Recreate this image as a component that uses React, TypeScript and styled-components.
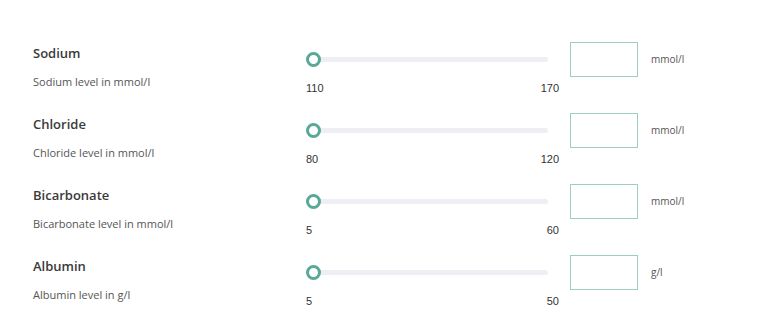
import styled, { createGlobalStyle } from "styled-components";

const Global = createGlobalStyle`
  body {
    margin: 0;
    background: #fff;
    font-family: "Open Sans", "Liberation Sans", sans-serif;
  }
`;

const Page = styled.div`
  padding: 40px 0 0 33px;
`;

const Row = styled.div`
  display: grid;
  grid-template-columns: 273px 253px 68px auto;
  height: 71px;
  align-items: start;
`;

const Label = styled.div`
  padding-top: 4px;
`;

const Title = styled.div`
  font-size: 13px;
  line-height: 18px;
  font-weight: 600;
  color: #3a3a3a;
`;

const Hint = styled.div`
  margin-top: 12px;
  font-size: 11px;
  line-height: 16px;
  color: #555;
`;

const SliderBox = styled.div`
  padding-top: 12px;
`;

const TrackWrap = styled.div`
  position: relative;
  height: 15px;
  margin-right: 11px;
`;

const Track = styled.div`
  position: absolute;
  left: 8px;
  right: 0;
  top: 5px;
  height: 5px;
  border-radius: 3px;
  background: #edeff4;
`;

const Thumb = styled.div`
  position: absolute;
  left: 0;
  top: 0;
  width: 15px;
  height: 15px;
  box-sizing: border-box;
  border-radius: 50%;
  border: 3px solid #5aa896;
  background: #fff;
`;

const Scale = styled.div`
  margin-top: 13px;
  display: flex;
  justify-content: space-between;
  font-family: "Liberation Sans", Arial, sans-serif;
  font-size: 11px;
  line-height: 16px;
  color: #333;
`;

const ValueInput = styled.input`
  box-sizing: border-box;
  width: 68px;
  height: 35px;
  margin: 2px 0 0 11px;
  border: 1px solid #9ccfc4;
  background: #fff;
  outline: none;
`;

const Unit = styled.div`
  margin: 12px 0 0 24px;
  font-size: 10px;
  line-height: 14px;
  color: #555;
`;

const items = [
  { name: "Sodium", hint: "Sodium level in mmol/l", min: 110, max: 170, unit: "mmol/l" },
  { name: "Chloride", hint: "Chloride level in mmol/l", min: 80, max: 120, unit: "mmol/l" },
  { name: "Bicarbonate", hint: "Bicarbonate level in mmol/l", min: 5, max: 60, unit: "mmol/l" },
  { name: "Albumin", hint: "Albumin level in g/l", min: 5, max: 50, unit: "g/l" },
];

export default function App() {
  return (
    <>
      <Global />
      <Page>
        {items.map((it) => (
          <Row key={it.name}>
            <Label>
              <Title>{it.name}</Title>
              <Hint>{it.hint}</Hint>
            </Label>
            <SliderBox>
              <TrackWrap>
                <Track />
                <Thumb />
              </TrackWrap>
              <Scale>
                <span>{it.min}</span>
                <span>{it.max}</span>
              </Scale>
            </SliderBox>
            <ValueInput type="text" />
            <Unit>{it.unit}</Unit>
          </Row>
        ))}
      </Page>
    </>
  );
}
